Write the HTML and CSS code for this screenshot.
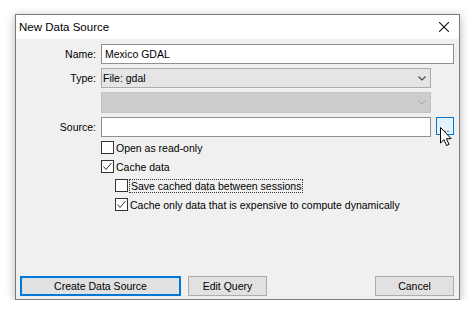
FILE: index.html
```html
<!DOCTYPE html>
<html lang="en">
<head>
    <meta charset="UTF-8">
    <title>New Data Source</title>
    <link rel="stylesheet" href="styles.css">
</head>
<body>
    <div class="dialog">
        <div class="titlebar">
            <span class="title">New Data Source</span>
            <svg class="close-icon" width="10" height="10" viewBox="0 0 10 10">
                <line x1="0" y1="0" x2="10" y2="10" stroke="#111" stroke-width="1.1"></line>
                <line x1="10" y1="0" x2="0" y2="10" stroke="#111" stroke-width="1.1"></line>
            </svg>
        </div>
        <div class="content">
            <div class="form">
                <span class="label">Name:</span>
                <div class="input wide">Mexico GDAL</div>

                <span class="label">Type:</span>
                <div class="combo">
                    <span>File: gdal</span>
                    <svg class="chevron" width="8" height="5" viewBox="0 0 8 5">
                        <polyline points="0.5,0.5 4,4 7.5,0.5" fill="none" stroke="#444" stroke-width="1.1"></polyline>
                    </svg>
                </div>
                <span></span>

                <span></span>
                <div class="combo disabled">
                    <span></span>
                    <svg class="chevron" width="8" height="5" viewBox="0 0 8 5">
                        <polyline points="0.5,0.5 4,4 7.5,0.5" fill="none" stroke="#b0b0b0" stroke-width="1.1"></polyline>
                    </svg>
                </div>
                <span></span>

                <span class="label">Source:</span>
                <div class="input"></div>
                <div class="browse">
                    <span class="dots">...</span>
                    <svg class="cursor" width="13" height="20" viewBox="0 0 13 20">
                        <path d="M0.5 0.5 L0.5 16 L4 12.6 L6.6 18.5 L9 17.4 L6.5 11.7 L11.2 11.7 Z" fill="#fff" stroke="#000" stroke-width="1"></path>
                    </svg>
                </div>
            </div>

            <div class="options">
                <div class="check-row">
                    <span class="box"></span>
                    <span>Open as read-only</span>
                </div>
                <div class="check-row">
                    <span class="box">
                        <svg width="11" height="11" viewBox="0 0 11 11"><polyline points="1.5,5.5 4,8.5 9.5,2" fill="none" stroke="#333" stroke-width="1"></polyline></svg>
                    </span>
                    <span>Cache data</span>
                </div>
                <div class="check-row nested">
                    <span class="box"></span>
                    <span class="focused">Save cached data between sessions</span>
                </div>
                <div class="check-row nested">
                    <span class="box">
                        <svg width="11" height="11" viewBox="0 0 11 11"><polyline points="1.5,5.5 4,8.5 9.5,2" fill="none" stroke="#333" stroke-width="1"></polyline></svg>
                    </span>
                    <span>Cache only data that is expensive to compute dynamically</span>
                </div>
            </div>

            <div class="buttons">
                <div class="button default create">Create Data Source</div>
                <div class="button edit">Edit Query</div>
                <div class="button cancel">Cancel</div>
            </div>
        </div>
    </div>
</body>
</html>
```

FILE: styles.css
```css
body, html {
    margin: 0;
    padding: 0;
    background-color: #ffffff;
    font-family: "Liberation Sans", Arial, sans-serif;
    font-size: 10.5px;
    color: #000000;
}
.dialog {
    margin: 14px 0 0 15px;
    width: 445px;
    height: 286px;
    box-sizing: border-box;
    border: 1px solid #7a7a7a;
    background-color: #f0f0f0;
    box-shadow: 0 2px 9px rgba(0, 0, 0, 0.3);
    display: flex;
    flex-direction: column;
}
.titlebar {
    height: 24px;
    background-color: #ffffff;
    display: flex;
    align-items: center;
    justify-content: space-between;
    padding: 0 10px 0 3px;
}
.title {
    font-size: 11.5px;
}
.content {
    flex: 1;
    display: flex;
    flex-direction: column;
    padding: 5px 5px 3px 0;
}
.form {
    display: grid;
    grid-template-columns: 80px 330px 18px;
    grid-template-rows: 20px 20px 21px 20px;
    column-gap: 5px;
    row-gap: 4px;
}
.label {
    display: flex;
    align-items: center;
    justify-content: flex-end;
}
.input {
    box-sizing: border-box;
    height: 20px;
    background-color: #ffffff;
    border: 1px solid #8f8f8f;
    padding-left: 3px;
    display: flex;
    align-items: center;
}
.input.wide {
    grid-column: 2 / 4;
}
.combo {
    box-sizing: border-box;
    background-color: #e5e5e5;
    border: 1px solid #acacac;
    padding: 0 4px 0 1px;
    display: flex;
    align-items: center;
    justify-content: space-between;
}
.combo.disabled {
    background-color: #cccccc;
    border-color: #c4c4c4;
}
.browse {
    position: relative;
    box-sizing: border-box;
    width: 18px;
    height: 18px;
    border: 1px solid #0078d7;
    background-color: #e5f1fb;
    display: flex;
    align-items: flex-end;
    justify-content: center;
}
.dots {
    line-height: 11px;
    font-size: 10px;
}
.cursor {
    position: absolute;
    left: 3px;
    top: 9px;
}
.options {
    margin: 1px 0 0 85px;
    display: flex;
    flex-direction: column;
}
.check-row {
    height: 19px;
    display: flex;
    align-items: center;
    gap: 2px;
}
.check-row.nested {
    margin-left: 14px;
}
.box {
    box-sizing: border-box;
    width: 13px;
    height: 13px;
    border: 1px solid #333333;
    background-color: #ffffff;
    display: flex;
}
.focused {
    outline: 1px dotted #333333;
    outline-offset: 0;
    padding: 0 1px;
}
.buttons {
    margin-top: auto;
    display: flex;
    padding-left: 4px;
}
.button {
    box-sizing: border-box;
    height: 20px;
    width: 79px;
    background-color: #e1e1e1;
    border: 1px solid #adadad;
    display: flex;
    align-items: center;
    justify-content: center;
}
.button.default {
    border: 2px solid #0078d7;
}
.create {
    width: 161px;
}
.edit {
    margin-left: 7px;
}
.cancel {
    margin-left: auto;
}
```
